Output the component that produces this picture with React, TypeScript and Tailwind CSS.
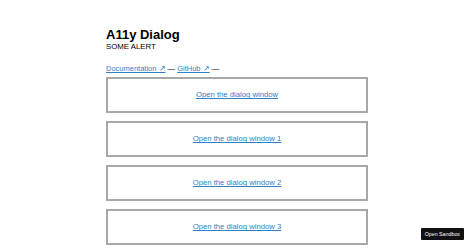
export default function App() {
  const items = ['Open the dialog window', 'Open the dialog window 1', 'Open the dialog window 2', 'Open the dialog window 3'];
  return (
    <div className="min-h-screen bg-white text-black" style={{ fontFamily: '"Liberation Sans", Arial, sans-serif' }}>
      <main className="mx-auto w-[262px] pt-[27px]">
        <h1 className="text-[13px] font-bold leading-[15px]">A11y Dialog</h1>
        <p className="text-[7.8px] leading-[10px] uppercase">Some alert</p>
        <p className="mt-[12px] text-[7.5px] leading-[10px]">
          <a href="#" className="text-[#2f7fc3] underline">Documentation ↗</a> — <a href="#" className="text-[#2f7fc3] underline">GitHub ↗</a> —
        </p>
        <div className="mt-[3px] flex flex-col gap-[8px]">
          {items.map((label) => (
            <div key={label} className="flex h-[36px] items-center justify-center border-2 border-[#a8a8a8]">
              <a href="#" className="text-[7.7px] text-[#2f7fc3] underline">{label}</a>
            </div>
          ))}
        </div>
      </main>
      <button className="fixed bottom-[8px] right-[10px] flex h-[12px] items-center rounded-[1px] bg-[#111] px-[4px] text-[5.3px] leading-[6px] text-white">
        Open Sandbox
      </button>
    </div>
  );
}
